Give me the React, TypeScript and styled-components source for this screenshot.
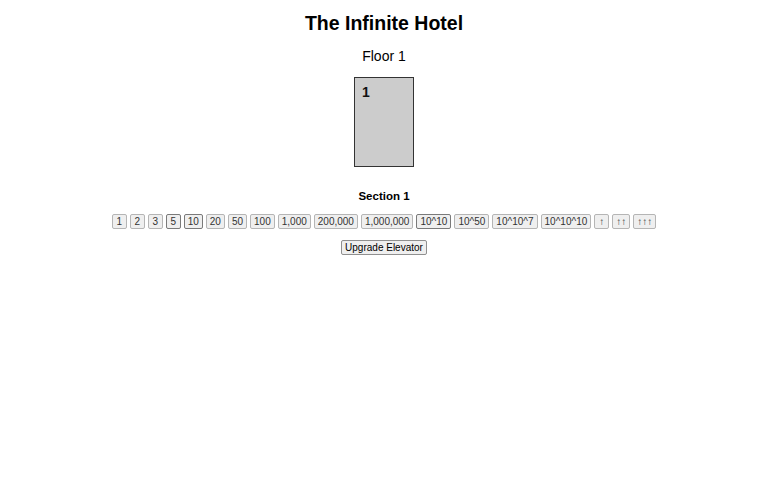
import React from "react";
import styled, { createGlobalStyle } from "styled-components";

const GlobalStyle = createGlobalStyle`
  html, body {
    margin: 0;
    padding: 0;
    background: #ffffff;
  }
  body {
    font-family: "Liberation Sans", Arial, sans-serif;
    color: #000;
  }
`;

const floors: { label: string; strong?: boolean }[] = [
  { label: "1" },
  { label: "2" },
  { label: "3" },
  { label: "5", strong: true },
  { label: "10", strong: true },
  { label: "20" },
  { label: "50" },
  { label: "100" },
  { label: "1,000" },
  { label: "200,000" },
  { label: "1,000,000" },
  { label: "10^10", strong: true },
  { label: "10^50" },
  { label: "10^10^7" },
  { label: "10^10^10" },
  { label: "↑" },
  { label: "↑↑" },
  { label: "↑↑↑" },
];

const App: React.FC = () => {
  return (
    <Page>
      <GlobalStyle />
      <Title>The Infinite Hotel</Title>
      <FloorName>Floor 1</FloorName>
      <Room>
        <RoomNumber>1</RoomNumber>
      </Room>
      <SectionTitle>Section 1</SectionTitle>
      <FloorBar>
        {floors.map((f) => (
          <FloorButton key={f.label} $strong={f.strong}>
            {f.label}
          </FloorButton>
        ))}
      </FloorBar>
      <UpgradeButton>Upgrade Elevator</UpgradeButton>
    </Page>
  );
};

export default App;

const Page = styled.div`
  width: 768px;
  height: 480px;
  display: flex;
  flex-direction: column;
  align-items: center;
  padding-top: 11px;
  box-sizing: border-box;
`;

const Title = styled.h1`
  margin: 0;
  font-size: 19.5px;
  line-height: 24px;
  font-weight: bold;
`;

const FloorName = styled.div`
  margin-top: 13px;
  font-size: 14px;
  line-height: 16px;
`;

const Room = styled.div`
  margin-top: 13px;
  width: 60px;
  height: 90px;
  box-sizing: border-box;
  background: #cccccc;
  border: 1px solid #333333;
  padding: 6px 7px;
`;

const RoomNumber = styled.div`
  font-size: 14px;
  font-weight: bold;
  line-height: 16px;
  color: #111;
`;

const SectionTitle = styled.div`
  margin-top: 23px;
  font-size: 11.5px;
  line-height: 12px;
  font-weight: bold;
`;

const FloorBar = styled.div`
  margin-top: 12px;
  display: flex;
  justify-content: center;
  gap: 3px;
`;

const FloorButton = styled.button<{ $strong?: boolean }>`
  font-family: "Liberation Sans", Arial, sans-serif;
  font-size: 10px;
  line-height: 11px;
  padding: 1px 3px;
  min-width: 15px;
  background: #efefef;
  color: #333;
  border: 1px solid ${(p) => (p.$strong ? "#7a7a7a" : "#b5b5b5")};
  border-radius: 2px;
  cursor: pointer;
`;

const UpgradeButton = styled.button`
  margin-top: 11px;
  font-family: "Liberation Sans", Arial, sans-serif;
  font-size: 10px;
  line-height: 13px;
  padding: 0 3px;
  background: #efefef;
  color: #000;
  border: 1px solid #8f8f8f;
  border-radius: 2px;
  cursor: pointer;
`;
